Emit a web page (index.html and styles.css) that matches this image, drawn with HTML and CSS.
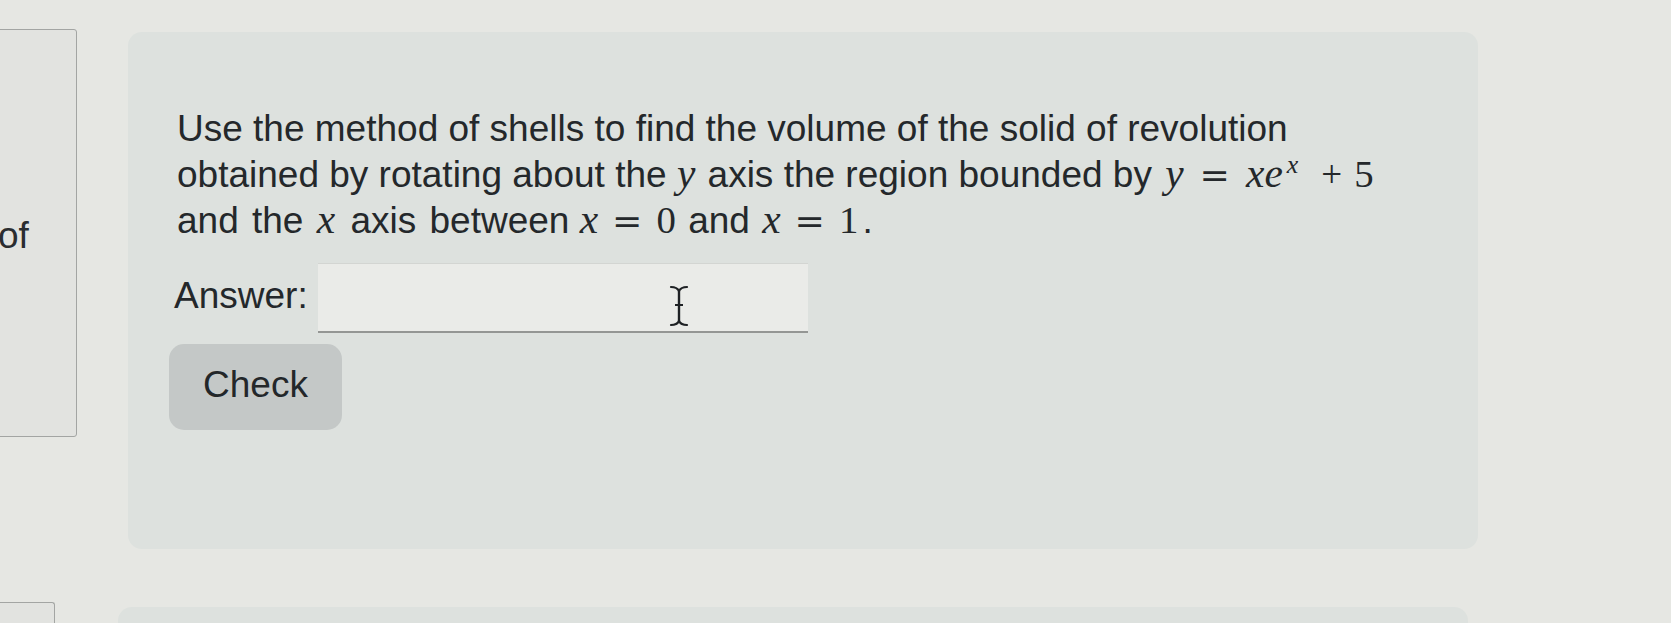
FILE: index.html
```html
<!DOCTYPE html>
<html lang="en">
<head>
<meta charset="utf-8">
<title>Shells question</title>
<link rel="stylesheet" href="styles.css">
</head>
<body>
<div class="screen">
  <div class="row row-top">
    <aside class="side"><span class="side-text">of</span></aside>
    <main class="card">
      <p class="question">Use the method of shells to find the volume of the solid of revolution<br>obtained by rotating about the <span class="mi var">y</span> axis the region bounded by <span class="math m2"><span class="mi">y</span><span class="mo eq">=</span><span class="mi">x</span><span class="mi">e</span><sup class="mi sup">x</sup><span class="mo plus">+</span><span class="mn">5</span></span><br><span class="wide">and the <span class="mi var">x</span> axis between</span> <span class="math tail"><span class="mi">x</span><span class="mo eq">=</span><span class="mn">0</span></span> and <span class="math lead last"><span class="mi">x</span><span class="mo eq">=</span><span class="mn">1</span></span>.</p>
      <div class="answer-row">
        <span class="answer-label">Answer:</span>
        <div class="answer-input">
          <svg class="ibeam" width="22" height="42" viewBox="0 0 22 42" aria-hidden="true">
            <path d="M3 2 Q9 2 11 6 Q13 2 19 2" fill="none" stroke="#1e2124" stroke-width="2.2" stroke-linecap="round"/>
            <path d="M11 6 V36" fill="none" stroke="#1e2124" stroke-width="2.4"/>
            <path d="M7 20 H15" fill="none" stroke="#1e2124" stroke-width="2"/>
            <path d="M3 40 Q9 40 11 36 Q13 40 19 40" fill="none" stroke="#1e2124" stroke-width="2.2" stroke-linecap="round"/>
          </svg>
        </div>
      </div>
      <button class="check" type="button">Check</button>
    </main>
  </div>
  <div class="row row-bottom">
    <div class="side-bottom"></div>
    <div class="card-bottom"></div>
  </div>
</div>
</body>
</html>
```
FILE: styles.css
```css
html, body {
  margin: 0;
  padding: 0;
  height: 100%;
  overflow: hidden;
}
body {
  background: #e6e7e3;
  font-family: "Liberation Sans", Arial, sans-serif;
  color: #24282b;
}
.screen {
  padding-top: 29px;
}
.row {
  display: flex;
  align-items: flex-start;
}
.row-top {
  gap: 51px;
}
.side {
  box-sizing: border-box;
  width: 87px;
  margin-left: -10px;
  height: 408px;
  background: #e2e3e0;
  border: 1.5px solid #a3a5a3;
  border-radius: 0 3px 3px 0;
  display: flex;
  align-items: flex-start;
  padding-top: 186px;
}
.side-text {
  font-size: 37px;
  line-height: 40px;
  margin-left: 7px;
  color: #2a2d30;
}
.card {
  box-sizing: border-box;
  width: 1350px;
  height: 517px;
  margin-top: 3px;
  background: #dde1de;
  border-radius: 14px;
  padding: 74px 40px 0 49px;
}
.question {
  margin: 0;
  font-size: 37px;
  line-height: 46px;
}
.wide {
  word-spacing: 3px;
}
.mi, .mn, .mo {
  font-family: "Liberation Serif", "Times New Roman", serif;
  line-height: 0;
}
.mi {
  font-style: italic;
  font-size: 1.12em;
}
.mn, .mo {
  font-size: 1.05em;
}
.mi.var {
  margin: 0 2px 0 0;
}
.math.m2 {
  margin-left: 3px;
}
.mo.eq {
  font-family: "DejaVu Serif", "Liberation Serif", serif;
  font-size: 0.98em;
  padding: 0 14px;
}
.m2 .mo.eq {
  padding: 0 16px;
}
.mo.plus {
  font-size: 1em;
  padding: 0 12px 0 23px;
}
.sup {
  font-size: 0.7em;
  vertical-align: 14px;
  margin-left: 4px;
}
.math.tail {
  margin-right: 2px;
}
.math.lead {
  margin-left: 2px;
}
.math.last {
  margin-right: 4px;
}
.answer-row {
  display: flex;
  align-items: center;
  margin-top: 19px;
  margin-left: -3px;
}
.answer-label {
  font-size: 37px;
  line-height: 44px;
  margin-right: 10px;
  margin-bottom: 4px;
}
.answer-input {
  position: relative;
  box-sizing: border-box;
  width: 490px;
  height: 70px;
  background: #eaebe8;
  border-top: 1px solid #d3d5d2;
  border-bottom: 2px solid #949694;
}
.ibeam {
  position: absolute;
  left: 350px;
  top: 21px;
}
.check {
  display: block;
  margin-top: 11px;
  margin-left: -8px;
  width: 173px;
  height: 86px;
  border: none;
  border-radius: 15px;
  background: #c4c8c7;
  font-family: "Liberation Sans", Arial, sans-serif;
  font-size: 37px;
  color: #23272a;
  padding: 0 0 4px 0;
}
.row-bottom {
  margin-top: 53px;
  gap: 63px;
}
.side-bottom {
  box-sizing: border-box;
  width: 65px;
  margin-left: -10px;
  height: 21px;
  background: #e2e3e0;
  border: 1.5px solid #a3a5a3;
  border-bottom: none;
  border-radius: 0 3px 0 0;
}
.card-bottom {
  width: 1350px;
  height: 16px;
  margin-top: 5px;
  background: #dde1de;
  border-radius: 14px 14px 0 0;
}
```
